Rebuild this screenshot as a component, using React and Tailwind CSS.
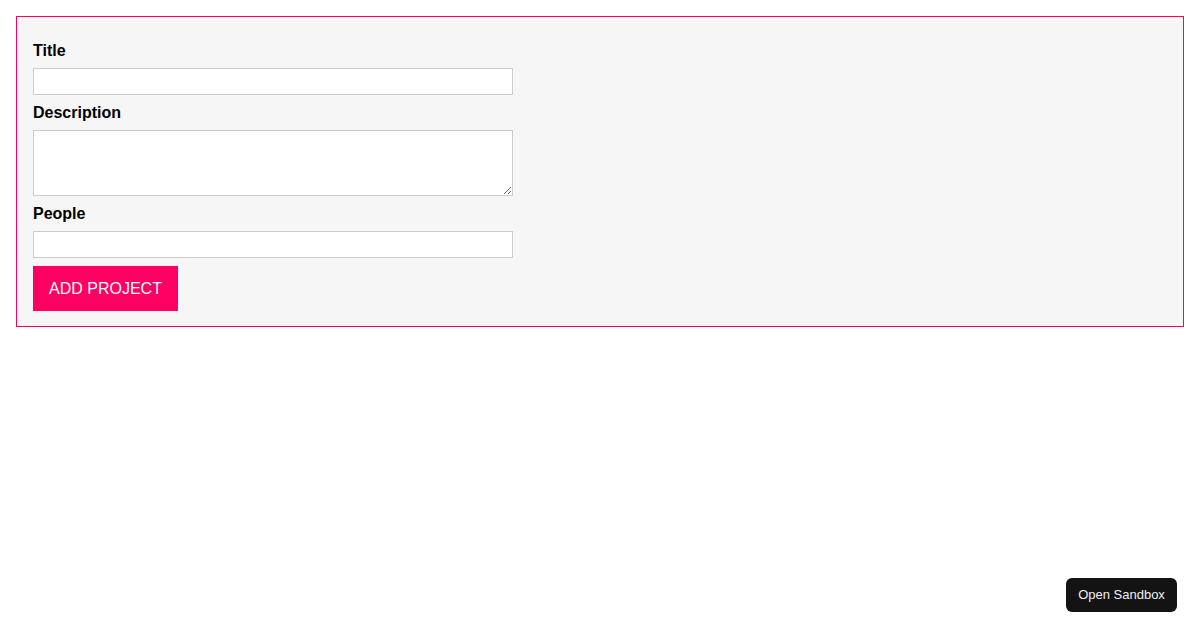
export default function App() {
  return (
    <div className="min-h-[630px] bg-white font-['Liberation_Sans',Arial,sans-serif] text-black">
      <form className="m-4 flex flex-col border border-[#ff0062] bg-[#f6f6f6] px-4 pb-[15px] pt-6">
        <label className="block h-[19px] text-base font-bold leading-[19px]">Title</label>
        <input type="text" className="mt-2 block h-[27px] w-[480px] border border-[#cccccc] bg-white outline-none" />
        <label className="mt-2 block h-[19px] text-base font-bold leading-[19px]">Description</label>
        <textarea className="mt-2 block h-[66px] w-[480px] border border-[#cccccc] bg-white outline-none" />
        <label className="mt-2 block h-[19px] text-base font-bold leading-[19px]">People</label>
        <input type="text" className="mt-2 block h-[27px] w-[480px] border border-[#cccccc] bg-white outline-none" />
        <div className="mt-2">
          <button type="button" className="h-[45px] w-[145px] bg-[#ff0062] text-base text-white">
            ADD PROJECT
          </button>
        </div>
      </form>
      <button
        type="button"
        className="fixed bottom-[18px] right-[23px] h-[34px] w-[111px] rounded-md bg-[#131313] text-[13px] text-[#f0f0f0]"
      >
        Open Sandbox
      </button>
    </div>
  );
}
